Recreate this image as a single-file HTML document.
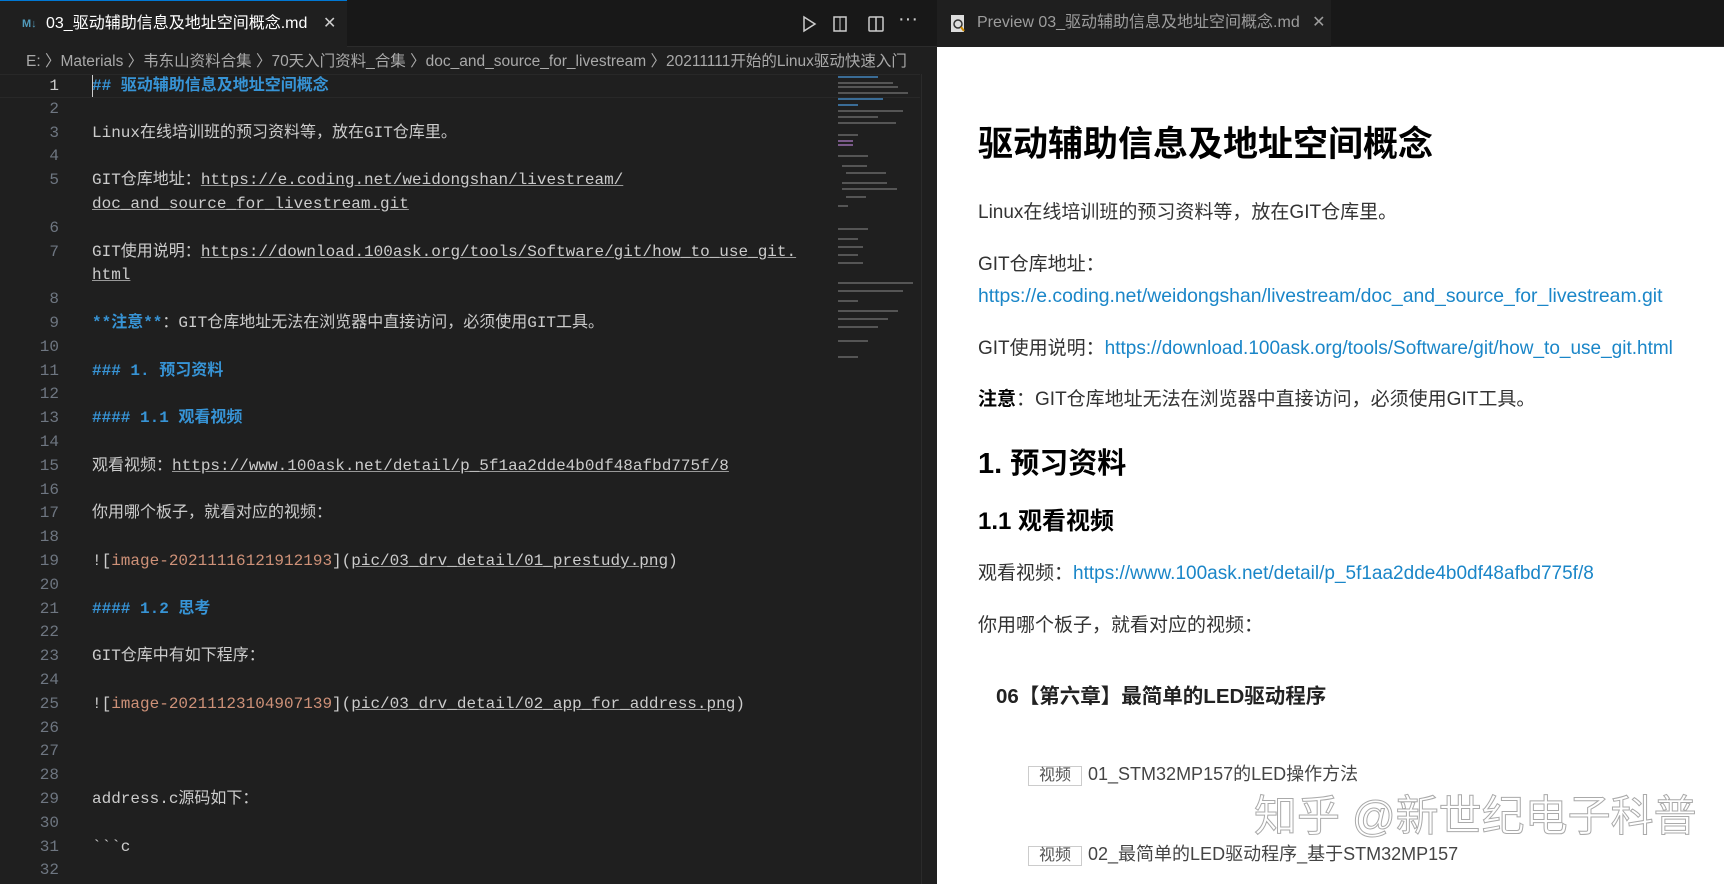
<!DOCTYPE html>
<html><head><meta charset="utf-8"><style>
*{margin:0;padding:0;box-sizing:border-box}
body{width:1724px;height:884px;overflow:hidden;background:#1f1f1f;font-family:"Liberation Sans","Noto Sans CJK SC",sans-serif;position:relative}
.tabbar{position:absolute;left:0;top:0;width:937px;height:47px;background:#181818;border-bottom:1px solid #2b2b2b}
.tab{position:absolute;left:0;top:0;width:347px;height:47px;background:#1f1f1f;border-top:1px solid #0078d4;color:#fff;font-size:16px;line-height:46px;padding-left:22px}
.tab .x{position:absolute;left:323px;top:0;color:#ccc}
.bc{position:absolute;left:26px;top:50px;color:#a9a9a9;font-size:15.5px;white-space:nowrap;line-height:24px}
.ed{position:absolute;left:0;top:74px;width:920px;font-family:"Liberation Mono","Noto Sans CJK SC",monospace;font-size:16px}
.r{height:23.8px;line-height:23.8px;position:relative;white-space:pre;color:#cccccc}
.n{position:absolute;right:861px;width:40px;text-align:right;color:#6e7681}
.t{position:absolute;left:92px}
.h{color:#3794d6;font-weight:bold}
.u{text-decoration:underline;text-decoration-color:#999}
.o{color:#ce9178}
.cur{border-top:1px solid #282828;border-bottom:1px solid #282828}
.pv{position:absolute;left:937px;top:47px;width:787px;height:837px;background:#fff}
.pvbar{position:absolute;left:937px;top:0;width:787px;height:47px;background:#181818;border-bottom:1px solid #2b2b2b}
.pvtab{position:absolute;left:937px;top:0;width:394px;height:47px;background:#1f1f1f;color:#9d9d9d;font-size:16px;line-height:46px;padding-left:40px;white-space:nowrap}
.p{position:absolute;left:978px;color:#333;font-size:19px;white-space:nowrap;line-height:1}
a{color:#1a86c8;text-decoration:none}
.btn{display:inline-block;border:1px solid #ccc;font-size:16px;color:#555;padding:1px 10px;margin-right:6px}
.mm div{position:absolute;height:2px;background:#555}
</style></head><body>
<div class="tabbar"><div class="tab"><span style="color:#519aba;font-size:11px;font-weight:bold;position:absolute;left:22px">M↓</span><span style="margin-left:24px">03_驱动辅助信息及地址空间概念.md</span><span class="x">✕</span></div>
<svg style="position:absolute;left:800px;top:15px" width="18" height="18"><path d="M4 2 L15 9 L4 16 Z" fill="none" stroke="#ccc" stroke-width="1.5"/></svg>
<svg style="position:absolute;left:832px;top:15px" width="18" height="18"><rect x="2" y="2" width="12" height="14" fill="none" stroke="#ccc" stroke-width="1.5"/><line x1="8" y1="2" x2="8" y2="16" stroke="#ccc"/></svg>
<svg style="position:absolute;left:867px;top:15px" width="18" height="18"><rect x="2" y="2" width="14" height="14" rx="1" fill="none" stroke="#ccc" stroke-width="1.5"/><line x1="9" y1="2" x2="9" y2="16" stroke="#ccc" stroke-width="1.5"/></svg>
<div style="position:absolute;left:898px;top:8px;color:#ccc;font-size:20px">···</div>
</div>
<div class="bc">E: 〉Materials 〉韦东山资料合集 〉70天入门资料_合集 〉doc_and_source_for_livestream 〉20211111开始的Linux驱动快速入门</div>
<div class="ed">
<div class="r cur"><span class="n" style="color:#ccc">1</span><span class="t h">## 驱动辅助信息及地址空间概念</span></div>
<div class="r"><span class="n">2</span></div>
<div class="r"><span class="n">3</span><span class="t">Linux在线培训班的预习资料等，放在GIT仓库里。</span></div>
<div class="r"><span class="n">4</span></div>
<div class="r"><span class="n">5</span><span class="t">GIT仓库地址：<span class="u">https://e.coding.net/weidongshan/livestream/</span></span></div>
<div class="r"><span class="t u">doc_and_source_for_livestream.git</span></div>
<div class="r"><span class="n">6</span></div>
<div class="r"><span class="n">7</span><span class="t">GIT使用说明：<span class="u">https://download.100ask.org/tools/Software/git/how_to_use_git.</span></span></div>
<div class="r"><span class="t u">html</span></div>
<div class="r"><span class="n">8</span></div>
<div class="r"><span class="n">9</span><span class="t"><span class="h">**注意**</span>：GIT仓库地址无法在浏览器中直接访问，必须使用GIT工具。</span></div>
<div class="r"><span class="n">10</span></div>
<div class="r"><span class="n">11</span><span class="t h">### 1. 预习资料</span></div>
<div class="r"><span class="n">12</span></div>
<div class="r"><span class="n">13</span><span class="t h">#### 1.1 观看视频</span></div>
<div class="r"><span class="n">14</span></div>
<div class="r"><span class="n">15</span><span class="t">观看视频：<span class="u">https://www.100ask.net/detail/p_5f1aa2dde4b0df48afbd775f/8</span></span></div>
<div class="r"><span class="n">16</span></div>
<div class="r"><span class="n">17</span><span class="t">你用哪个板子，就看对应的视频：</span></div>
<div class="r"><span class="n">18</span></div>
<div class="r"><span class="n">19</span><span class="t">![<span class="o">image-20211116121912193</span>](<span class="u">pic/03_drv_detail/01_prestudy.png</span>)</span></div>
<div class="r"><span class="n">20</span></div>
<div class="r"><span class="n">21</span><span class="t h">#### 1.2 思考</span></div>
<div class="r"><span class="n">22</span></div>
<div class="r"><span class="n">23</span><span class="t">GIT仓库中有如下程序：</span></div>
<div class="r"><span class="n">24</span></div>
<div class="r"><span class="n">25</span><span class="t">![<span class="o">image-20211123104907139</span>](<span class="u">pic/03_drv_detail/02_app_for_address.png</span>)</span></div>
<div class="r"><span class="n">26</span></div>
<div class="r"><span class="n">27</span></div>
<div class="r"><span class="n">28</span></div>
<div class="r"><span class="n">29</span><span class="t">address.c源码如下：</span></div>
<div class="r"><span class="n">30</span></div>
<div class="r"><span class="n">31</span><span class="t">&#96;&#96;&#96;c</span></div>
<div class="r"><span class="n">32</span></div>
</div>
<div style="position:absolute;left:92px;top:75px;width:1px;height:22px;background:#ccc"></div>
<div class="mm">
<div style="left:838px;top:76px;width:40px;background:#3a6c96"></div>
<div style="left:838px;top:82px;width:55px"></div>
<div style="left:838px;top:86px;width:60px"></div>
<div style="left:838px;top:92px;width:70px"></div>
<div style="left:838px;top:98px;width:45px;background:#3a6c96"></div>
<div style="left:838px;top:104px;width:20px;background:#3a6c96"></div>
<div style="left:838px;top:110px;width:65px"></div>
<div style="left:838px;top:116px;width:40px"></div>
<div style="left:838px;top:122px;width:58px"></div>
<div style="left:838px;top:134px;width:20px"></div>
<div style="left:838px;top:140px;width:15px;background:#7a5a8a"></div>
<div style="left:838px;top:144px;width:15px;background:#7a5a8a"></div>
<div style="left:838px;top:155px;width:30px"></div>
<div style="left:842px;top:165px;width:25px"></div>
<div style="left:846px;top:172px;width:40px"></div>
<div style="left:842px;top:182px;width:45px"></div>
<div style="left:842px;top:188px;width:55px"></div>
<div style="left:846px;top:196px;width:20px"></div>
<div style="left:838px;top:205px;width:10px"></div>
<div style="left:838px;top:228px;width:30px"></div>
<div style="left:838px;top:238px;width:20px"></div>
<div style="left:838px;top:246px;width:25px"></div>
<div style="left:838px;top:254px;width:20px"></div>
<div style="left:838px;top:262px;width:25px"></div>
<div style="left:838px;top:282px;width:75px"></div>
<div style="left:838px;top:290px;width:65px"></div>
<div style="left:838px;top:300px;width:20px"></div>
<div style="left:838px;top:310px;width:60px"></div>
<div style="left:838px;top:318px;width:50px"></div>
<div style="left:838px;top:326px;width:40px"></div>
<div style="left:838px;top:340px;width:30px"></div>
<div style="left:838px;top:356px;width:20px"></div>
</div>
<div style="position:absolute;left:921px;top:74px;width:1px;height:810px;background:#2b2b2b"></div>
<div class="pvbar"></div>
<div class="pvtab"><svg style="position:absolute;left:13px;top:14px" width="18" height="20"><rect x="1" y="1" width="13" height="17" fill="#ddd"/><circle cx="8" cy="10" r="4" fill="none" stroke="#333" stroke-width="1.5"/><line x1="11" y1="13" x2="14" y2="17" stroke="#c80" stroke-width="2"/></svg>Preview 03_驱动辅助信息及地址空间概念.md <span style="margin-left:8px">✕</span></div>
<div class="pv"></div>
<div class="p" style="top:127px;font-size:35px;font-weight:bold;color:#000">驱动辅助信息及地址空间概念</div>
<div class="p" style="top:203px">Linux在线培训班的预习资料等，放在GIT仓库里。</div>
<div class="p" style="top:255px">GIT仓库地址：</div>
<div class="p" style="top:287px;font-size:19.4px"><a>https://e.coding.net/weidongshan/livestream/doc_and_source_for_livestream.git</a></div>
<div class="p" style="top:339px">GIT使用说明：<a>https://download.100ask.org/tools/Software/git/how_to_use_git.html</a></div>
<div class="p" style="top:390px"><b style="color:#000">注意</b>：GIT仓库地址无法在浏览器中直接访问，必须使用GIT工具。</div>
<div class="p" style="top:450px;font-size:29px;font-weight:bold;color:#000">1. 预习资料</div>
<div class="p" style="top:510px;font-size:24px;font-weight:bold;color:#000">1.1 观看视频</div>
<div class="p" style="top:564px">观看视频：<a>https://www.100ask.net/detail/p_5f1aa2dde4b0df48afbd775f/8</a></div>
<div class="p" style="top:616px">你用哪个板子，就看对应的视频：</div>
<div class="p" style="left:996px;top:687px;font-size:20.5px;font-weight:bold;color:#222">06【第六章】最简单的LED驱动程序</div>
<div class="p" style="left:1028px;top:765px;font-size:18px;color:#444"><span class="btn">视频</span>01_STM32MP157的LED操作方法</div>
<div class="p" style="left:1028px;top:845px;font-size:18px;color:#444"><span class="btn">视频</span>02_最简单的LED驱动程序_基于STM32MP157</div>
<div class="p" style="left:1254px;top:796px;font-size:43px;color:rgba(255,255,255,0.9);-webkit-text-stroke:1px #aaa">知乎 @新世纪电子科普</div>
</body></html>
